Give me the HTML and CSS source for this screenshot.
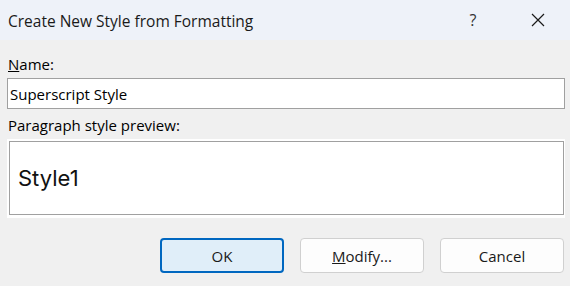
FILE: index.html
```html
<!DOCTYPE html>
<html lang="en">
<head>
<meta charset="UTF-8">
<title>Create New Style from Formatting</title>
<link rel="stylesheet" href="styles.css">
</head>
<body>
    <div class="dialog">
        <div class="titlebar">
            <span class="title">Create New Style from Formatting</span>
            <span class="help">?</span>
            <span class="close">
                <svg width="16" height="16" viewBox="0 0 16 16"><path d="M2 2 L14 14 M14 2 L2 14" stroke="#1a1a1a" stroke-width="1.2" fill="none"/></svg>
            </span>
        </div>
        <div class="content">
            <label class="field-label" for="name"><u>N</u>ame:</label>
            <input class="name-input" type="text" id="name" value="Superscript Style">
            <div class="field-label preview-label">Paragraph style preview:</div>
            <div class="preview-frame">
                <div class="preview">Style1</div>
            </div>
            <div class="buttons">
                <button class="btn btn-default">OK</button>
                <button class="btn"><u>M</u>odify...</button>
                <button class="btn">Cancel</button>
            </div>
        </div>
    </div>
</body>
</html>
```
FILE: styles.css
```css
body {
    margin: 0;
    padding: 0;
    background: #f0f0f0;
    font-family: 'Open Sans', 'Noto Sans', sans-serif;
    font-size: 15px;
    color: #000;
}

.dialog {
    width: 570px;
    height: 286px;
    background: #f0f0f0;
    overflow: hidden;
}

.titlebar {
    height: 40px;
    background: #eef2f9;
    display: flex;
    align-items: center;
    padding-left: 8px;
}

.title {
    flex: 1;
    font-size: 15.5px;
    color: #1a1a1a;
    padding-top: 1px;
}

.help {
    width: 70px;
    text-align: center;
    font-size: 16px;
    color: #333;
}

.close {
    width: 60px;
    display: flex;
    justify-content: center;
    margin-right: 2px;
}

.content {
    padding: 0 5px 0 7px;
}

.field-label {
    display: block;
    height: 21px;
    line-height: 21px;
    margin-top: 14px;
    padding-left: 1px;
}

.name-input {
    display: block;
    box-sizing: border-box;
    width: 558px;
    height: 31px;
    margin-top: 3px;
    padding: 0 2px;
    border: 1px solid #a0a0a0;
    background: #fff;
    font-family: inherit;
    font-size: 15px;
    outline: none;
}

.preview-label {
    margin-top: 6px;
}

.preview-frame {
    box-sizing: border-box;
    width: 558px;
    height: 79px;
    margin-top: 3px;
    padding: 2px 1px 3px 2px;
    background: #fff;
}

.preview {
    box-sizing: border-box;
    height: 100%;
    border: 1px solid #a0a0a0;
    padding-left: 8px;
    display: flex;
    align-items: center;
    font-family: 'Inter', 'Roboto', sans-serif;
    font-size: 22px;
    color: #111;
}

.buttons {
    display: flex;
    justify-content: flex-end;
    gap: 16px;
    margin-top: 20px;
    padding-right: 1px;
}

.btn {
    box-sizing: border-box;
    width: 124px;
    height: 35px;
    background: #fdfdfd;
    border: 1px solid #d0d0d0;
    border-radius: 4px;
    font-family: inherit;
    font-size: 15px;
    color: #1a1a1a;
    padding: 0;
}

.btn-default {
    background: #e0eef9;
    border: 2px solid #0067c0;
}
```
